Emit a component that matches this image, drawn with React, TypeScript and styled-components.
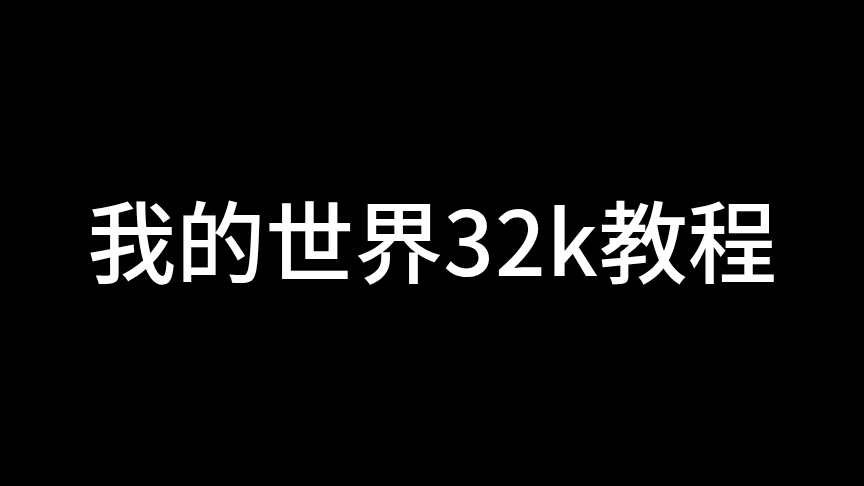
import React from "react";
import styled, { createGlobalStyle } from "styled-components";

const Global = createGlobalStyle`
  html, body { margin: 0; padding: 0; background: #000; }
  #root { height: 100vh; }
`;

const Screen = styled.div`
  box-sizing: border-box;
  width: 100vw;
  height: 100vh;
  padding-bottom: 12px;
  background: #000;
  display: flex;
  align-items: center;
  justify-content: center;
`;

const Title = styled.h1`
  margin: 0;
  color: #fff;
  font-family: "Noto Sans CJK SC", "Noto Sans", sans-serif;
  font-weight: 500;
  font-size: 89px;
  line-height: 1;
  letter-spacing: 0;
  white-space: nowrap;
`;

const Latin = styled.span`
  letter-spacing: 1px;
`;

export default function App() {
  return (
    <>
      <Global />
      <Screen>
        <Title>
          我的世界<Latin>32k</Latin>教程
        </Title>
      </Screen>
    </>
  );
}
